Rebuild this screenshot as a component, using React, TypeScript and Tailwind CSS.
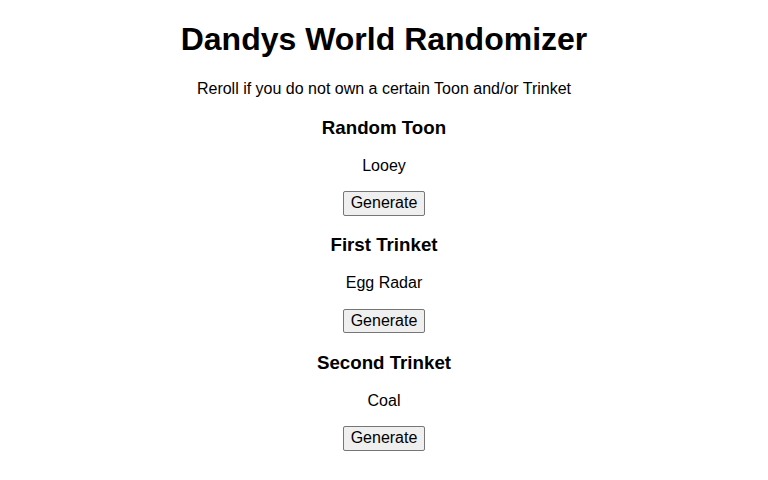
import { useState } from "react";

const toons = ["Looey", "Boxten", "Poppy", "Shrimpo", "Astro", "Pebble", "Sprout", "Vee"];
const trinkets = ["Egg Radar", "Coal", "Clown Horn", "Ghost Snakes", "Magnifying Glass", "Pink Bow"];

function pick(list: string[]) {
  return list[Math.floor(Math.random() * list.length)];
}

function Section({ title, initial, list }: { title: string; initial: string; list: string[] }) {
  const [value, setValue] = useState(initial);

  return (
    <div>
      <h3 className="text-[18.72px] font-bold my-[18.72px] leading-[21.25px]">{title}</h3>
      <p className="my-4 leading-[18.4px]">{value}</p>
      <div className="flex justify-center">
        <button
          className="text-base leading-[18.4px] px-[7px] py-[2px] border border-[#767676] rounded-[2px] bg-[#efefef] text-black"
          onClick={() => setValue(pick(list))}
        >
          Generate
        </button>
      </div>
    </div>
  );
}

export default function App() {
  return (
    <div className="text-center text-black bg-white min-h-screen font-['Liberation_Sans',Arial,sans-serif] flow-root">
      <h1 className="text-[32px] font-bold my-[21.44px] leading-[36.8px]">Dandys World Randomizer</h1>
      <p className="my-4 leading-[18.4px]">Reroll if you do not own a certain Toon and/or Trinket</p>
      <Section title="Random Toon" initial="Looey" list={toons} />
      <Section title="First Trinket" initial="Egg Radar" list={trinkets} />
      <Section title="Second Trinket" initial="Coal" list={trinkets} />
    </div>
  );
}
